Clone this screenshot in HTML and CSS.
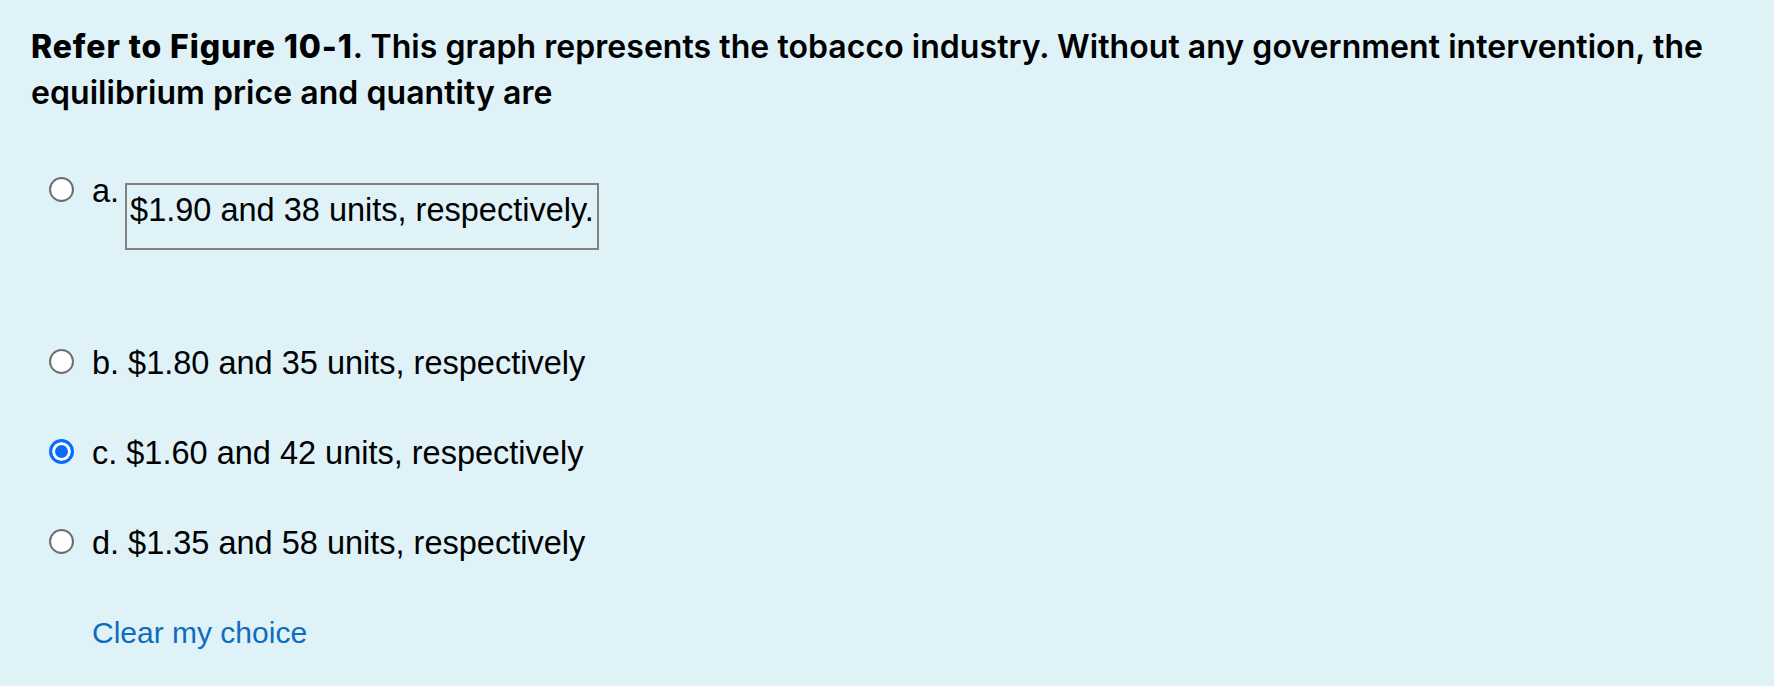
FILE: index.html
```html
<!DOCTYPE html>
<html>
<head>
<meta charset="utf-8">
<link rel="stylesheet" href="styles.css">
</head>
<body>
<div class="formulation">
  <div class="qtext"><strong class="ref">Refer to Figure 10-1</strong>. This graph represents the tobacco industry. Without any government intervention, the equilibrium price and quantity are</div>
  <div class="answer">
    <div class="opt opt-a">
      <input type="radio" name="q" class="radio">
      <span class="num">a.</span>
      <div class="boxed">$1.90 and 38 units, respectively.</div>
    </div>
    <div class="opt">
      <input type="radio" name="q" class="radio">
      <span class="num">b.</span><span class="txt">$1.80 and 35 units, respectively</span>
    </div>
    <div class="opt">
      <input type="radio" name="q" class="radio" checked>
      <span class="num">c.</span><span class="txt">$1.60 and 42 units, respectively</span>
    </div>
    <div class="opt">
      <input type="radio" name="q" class="radio">
      <span class="num">d.</span><span class="txt">$1.35 and 58 units, respectively</span>
    </div>
  </div>
  <div class="clear"><a href="#" class="clear-link">Clear my choice</a></div>
</div>
</body>
</html>
```
FILE: styles.css
```css
html, body {
  margin: 0;
  padding: 0;
  background: #ffffff;
}
.formulation {
  background: #def2f8;
  height: 686px;
  box-sizing: border-box;
  padding: 24px 16px 0 31px;
  color: #000;
}
.qtext {
  font-family: Inter, "Noto Sans", sans-serif;
  font-weight: 600;
  font-size: 32px;
  line-height: 46px;
  letter-spacing: 0.05px;
}
.ref {
  font-weight: 800;
  letter-spacing: 0.9px;
}
.answer {
  margin-top: 57px;
  padding-left: 18px;
  font-family: "Liberation Sans", Arial, sans-serif;
  font-size: 32.5px;
  line-height: 36px;
}
.opt {
  display: flex;
  align-items: flex-start;
  margin-bottom: 54px;
}
.opt-a {
  margin-bottom: 95px;
}
.radio {
  appearance: none;
  -webkit-appearance: none;
  margin: 4px 18px 0 0;
  width: 25px;
  height: 25px;
  box-sizing: border-box;
  border-radius: 50%;
  border: 2px solid #6e6e6e;
  background: #ffffff;
  flex: none;
}
.radio:checked {
  border: 3px solid #0a6cff;
  background: #0a6cff;
  box-shadow: inset 0 0 0 3px #ffffff;
}
.num {
  margin-right: 6px;
}
.txt {
  margin-left: 3px;
}
.boxed {
  margin-top: 10px;
  border: 2px solid #808080;
  padding: 7px 3px 20px 3px;
  height: 36px;
}
.clear {
  padding-left: 61px;
  font-family: "Liberation Sans", Arial, sans-serif;
  font-size: 30px;
  line-height: 36px;
}
.clear-link {
  color: #0f6cbf;
  text-decoration: none;
}
```
